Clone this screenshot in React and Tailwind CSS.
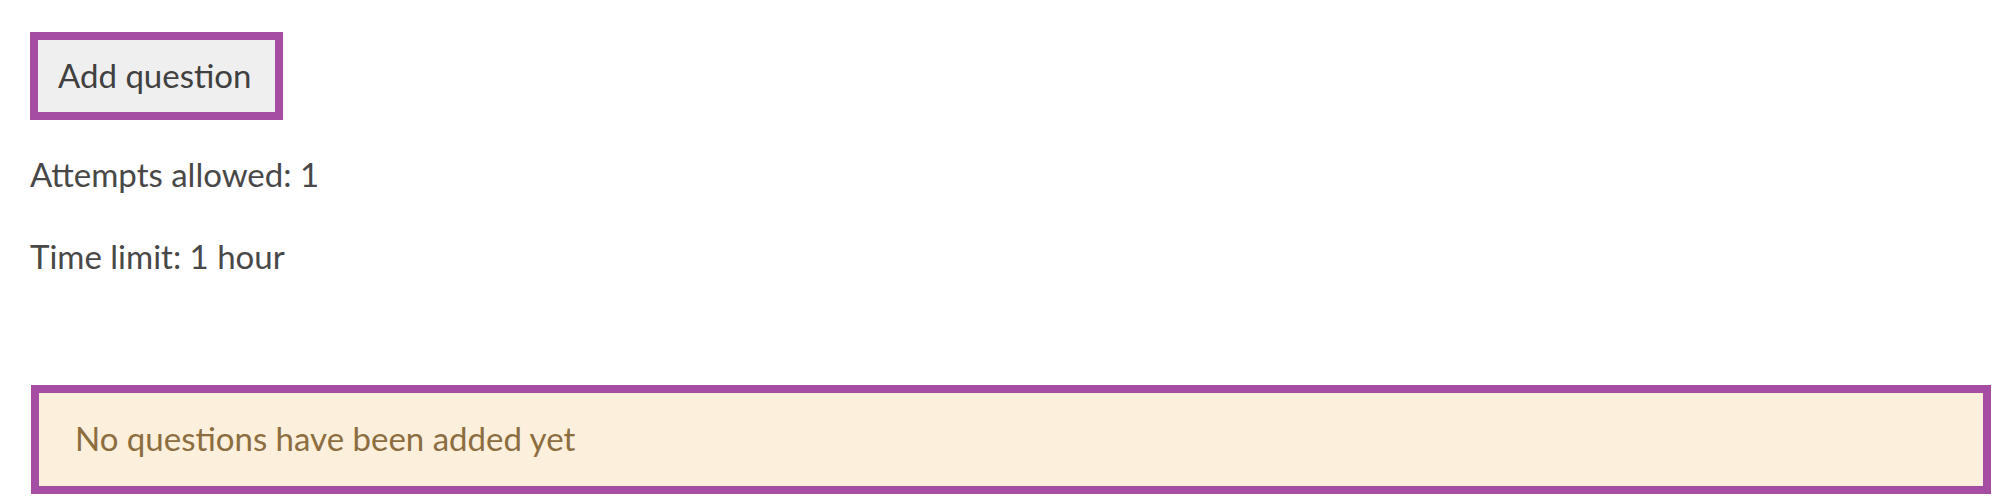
import React from 'react';

export default function App() {
    return (
        <div className="min-h-[504px] bg-white pl-[30px] pr-[9px] pt-[32px] text-[33px] leading-[40px] text-[#484848]" style={{ fontFamily: 'Lato, "Open Sans", sans-serif' }}>
            <button className="flex h-[88px] w-[253px] items-center border-8 border-[#a54ca3] bg-[#efefef] pb-[2px] pl-[20px] text-[#404040]">
                Add question
            </button>
            <p className="mt-[34px]">Attempts allowed: 1</p>
            <p className="mt-[42px]">Time limit: 1 hour</p>
            <div className="ml-px mt-[109px] flex h-[109px] items-center border-8 border-[#a54ca3] bg-[#fcefdc] pb-[4px] pl-[36px] text-[#8c6d3f]">
                No questions have been added yet
            </div>
        </div>
    );
}
